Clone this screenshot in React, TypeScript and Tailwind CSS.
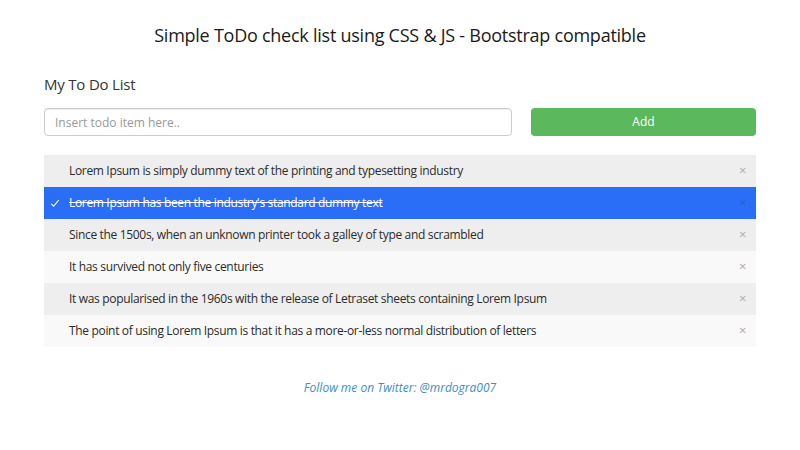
import { useState } from "react";

type Todo = {
    text: string;
    done: boolean;
};

const initial: Todo[] = [
    { text: "Lorem Ipsum is simply dummy text of the printing and typesetting industry", done: false },
    { text: "Lorem Ipsum has been the industry's standard dummy text", done: true },
    { text: "Since the 1500s, when an unknown printer took a galley of type and scrambled", done: false },
    { text: "It has survived not only five centuries", done: false },
    { text: "It was popularised in the 1960s with the release of Letraset sheets containing Lorem Ipsum", done: false },
    { text: "The point of using Lorem Ipsum is that it has a more-or-less normal distribution of letters", done: false },
];

function App() {
    const [todos, setTodos] = useState(initial);
    const [value, setValue] = useState("");

    const add = () => {
        if (!value.trim()) return;
        setTodos([...todos, { text: value, done: false }]);
        setValue("");
    };

    const toggle = (i: number) => {
        setTodos(todos.map((t, idx) => (idx === i ? { ...t, done: !t.done } : t)));
    };

    const remove = (i: number) => {
        setTodos(todos.filter((_, idx) => idx !== i));
    };

    return (
        <div className="min-h-[450px] bg-white font-['Open_Sans',sans-serif] text-[#333]">
            <div className="w-[712px] mx-auto pt-[22px]">
                <h1 className="text-center text-[18px] leading-[26px] tracking-[-0.25px] text-[#1a1a1a]">
                    Simple ToDo check list using CSS &amp; JS - Bootstrap compatible
                </h1>

                <h2 className="mt-[25px] text-[15px] leading-[22px] tracking-[-0.2px] text-[#333]">My To Do List</h2>

                <div className="flex mt-[13px] gap-[19px]">
                    <input
                        type="text"
                        placeholder="Insert todo item here.."
                        value={value}
                        onChange={(e) => setValue(e.target.value)}
                        className="w-[468px] h-[28px] border border-[#ccc] rounded-[4px] px-[10px] text-[12px] placeholder:text-[#999] shadow-[inset_0_1px_1px_rgba(0,0,0,0.075)] outline-none"
                    />
                    <button
                        onClick={add}
                        className="flex-1 h-[28px] rounded-[4px] bg-[#5cb85c] text-white text-[12px]"
                    >
                        Add
                    </button>
                </div>

                <ul className="mt-[19px]">
                    {todos.map((t, i) => (
                        <li
                            key={i}
                            onClick={() => toggle(i)}
                            className={
                                "relative flex items-center h-[32px] pl-[25px] pr-[40px] text-[12px] tracking-[-0.33px] cursor-pointer " +
                                (t.done
                                    ? "bg-[#2a6ef7] text-white line-through"
                                    : i % 2 === 0
                                    ? "bg-[#eee] text-[#2b2b2b]"
                                    : "bg-[#f9f9f9] text-[#2b2b2b]")
                            }
                        >
                            {t.done && (
                                <svg
                                    viewBox="0 0 12 12"
                                    className="absolute left-[6px] top-[12px] w-[10px] h-[9px]"
                                    fill="none"
                                    stroke="white"
                                    strokeWidth={1.4}
                                >
                                    <path d="M1 6.5 L4.2 9.5 L11 1.5" />
                                </svg>
                            )}
                            {t.text}
                            <span
                                onClick={(e) => {
                                    e.stopPropagation();
                                    remove(i);
                                }}
                                className={
                                    "absolute right-[10px] top-0 h-[32px] flex items-center text-[13px] no-underline " +
                                    (t.done ? "text-[#2a5fd0]" : "text-[#aaa]")
                                }
                            >
                                ×
                            </span>
                        </li>
                    ))}
                </ul>

                <p className="mt-[32px] text-center text-[12px] italic text-[#3a8fc7]">
                    Follow me on Twitter: @mrdogra007
                </p>
            </div>
        </div>
    );
}

export default App;
